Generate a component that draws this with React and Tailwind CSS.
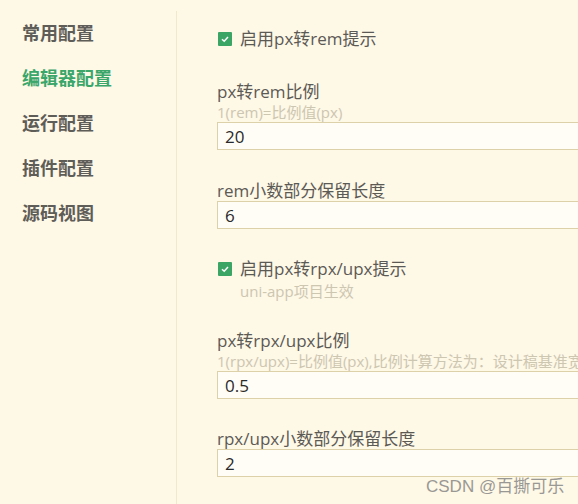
import { useState } from 'react';

const NAV = ['常用配置', '编辑器配置', '运行配置', '插件配置', '源码视图'];

function Check({ checked, onChange, children }) {
  return (
    <label className="flex items-center h-[20px] cursor-pointer">
      <span
        onClick={onChange}
        className={`w-[14px] h-[14px] ml-[1px] flex items-center justify-center rounded-[1px] ${
          checked ? 'bg-[#3ba566]' : 'bg-white border border-[#c9bf99]'
        }`}
      >
        {checked && (
          <svg width="10" height="10" viewBox="0 0 10 10">
            <path d="M2 5.2 L4.2 7.2 L8 3" fill="none" stroke="#fff" strokeWidth="1.5" />
          </svg>
        )}
      </span>
      <span className="ml-[8px] text-[17px] text-[#5c5a55]">{children}</span>
    </label>
  );
}

function Field({ label, hint, value, onChange, top }) {
  return (
    <div className={top}>
      <div className="text-[17px] leading-[20px] text-[#5c5a55]">{label}</div>
      {hint && (
        <div className="text-[15px] leading-[20px] text-[#cdc6b0] whitespace-nowrap">{hint}</div>
      )}
      <input
        value={value}
        onChange={(e) => onChange(e.target.value)}
        className="block w-[420px] h-[28px] bg-[#fffdf6] border border-[#dcd1a8] px-[7px] text-[17px] text-[#2a2a2a] outline-none"
      />
    </div>
  );
}

export default function App() {
  const [active, setActive] = useState(1);
  const [remTip, setRemTip] = useState(true);
  const [rpxTip, setRpxTip] = useState(true);
  const [vals, setVals] = useState({ rem: '20', remLen: '6', rpx: '0.5', rpxLen: '2' });
  const setVal = (k) => (v) => setVals({ ...vals, [k]: v });

  return (
    <div
      className="relative w-[578px] h-[504px] overflow-hidden bg-[#fef8e7] flex"
      style={{ fontFamily: '"Open Sans", "Noto Sans CJK SC", sans-serif' }}
    >
      <div className="w-[176px] shrink-0 pt-[11px]">
        {NAV.map((n, i) => (
          <div
            key={n}
            onClick={() => setActive(i)}
            className={`h-[45px] flex items-center pl-[22px] text-[18px] font-bold cursor-pointer ${
              i === active ? 'text-[#3aa66a]' : 'text-[#5f5d58]'
            }`}
          >
            {n}
          </div>
        ))}
      </div>

      <div className="mt-[11px] flex-1 min-w-0 border-l border-[#f2e8cc] pl-[40px] pt-[18px]">
        <Check checked={remTip} onChange={() => setRemTip(!remTip)}>
          启用px转rem提示
        </Check>

        <Field
          top="mt-[33px]"
          label="px转rem比例"
          hint="1(rem)=比例值(px)"
          value={vals.rem}
          onChange={setVal('rem')}
        />
        <Field
          top="mt-[31px]"
          label="rem小数部分保留长度"
          value={vals.remLen}
          onChange={setVal('remLen')}
        />

        <div className="mt-[30px]">
          <Check checked={rpxTip} onChange={() => setRpxTip(!rpxTip)}>
            启用px转rpx/upx提示
          </Check>
          <div className="ml-[23px] mt-[2px] text-[15px] leading-[20px] text-[#cdc6b0]">uni-app项目生效</div>
        </div>

        <Field
          top="mt-[30px]"
          label="px转rpx/upx比例"
          hint="1(rpx/upx)=比例值(px),比例计算方法为：设计稿基准宽度/750"
          value={vals.rpx}
          onChange={setVal('rpx')}
        />
        <Field
          top="mt-[30px]"
          label="rpx/upx小数部分保留长度"
          value={vals.rpxLen}
          onChange={setVal('rpxLen')}
        />
      </div>

      <div
        className="absolute left-[426px] top-[477px] text-[17px] leading-[20px] text-[#9a9894]"
        style={{ fontFamily: '"Liberation Sans", "Noto Sans CJK SC", sans-serif' }}
      >
        CSDN @百撕可乐
      </div>
    </div>
  );
}
